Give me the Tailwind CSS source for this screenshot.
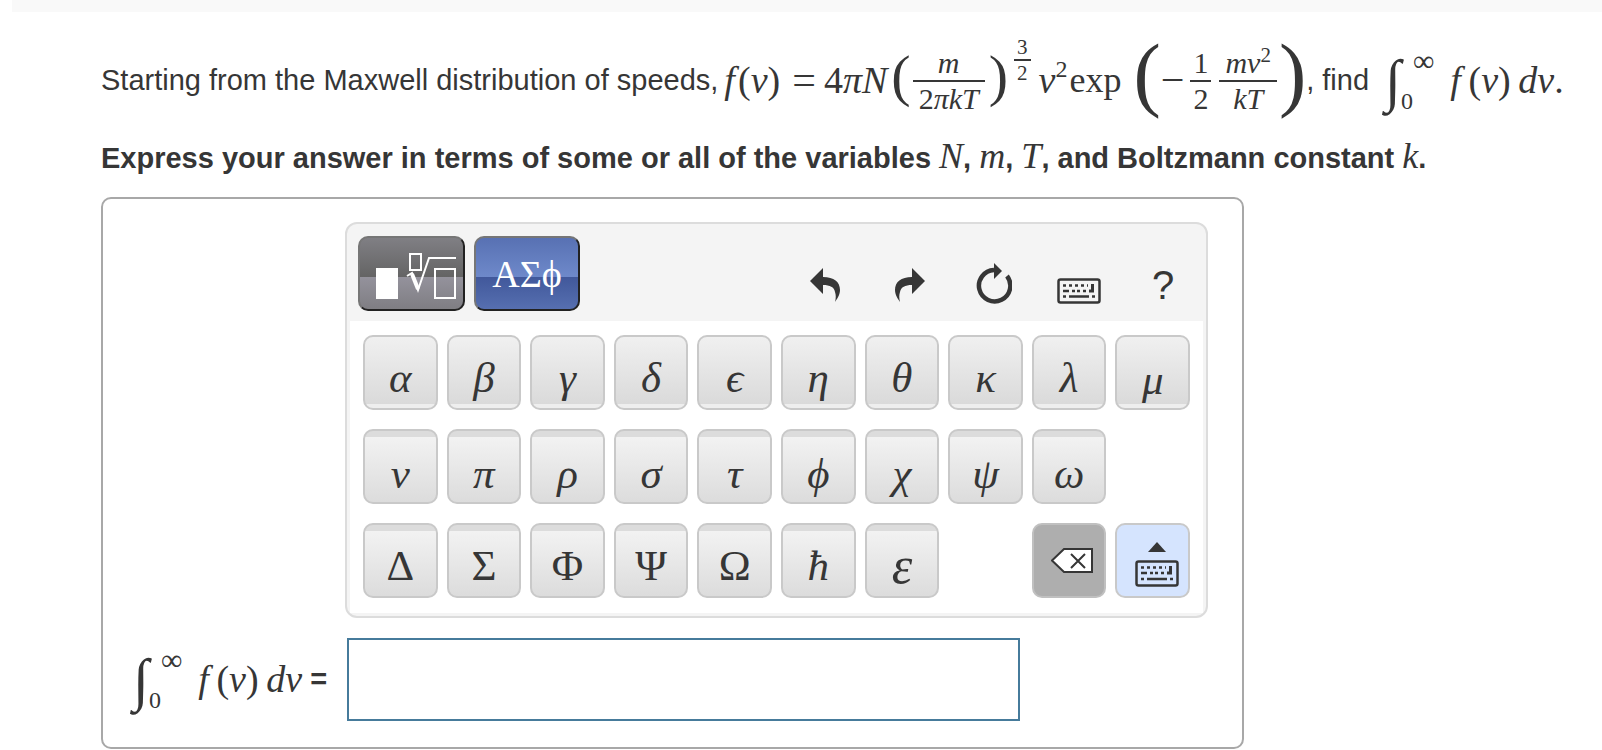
<!DOCTYPE html>
<html lang="en">
<head>
  <meta charset="UTF-8">
  <meta name="viewport" content="width=device-width, initial-scale=1.0">
  <title>Maxwell distribution of speeds</title>
  <script src="https://cdn.jsdelivr.net/npm/@tailwindcss/browser@4"></script>
</head>
<body class="bg-white text-[#363636] font-['Liberation_Sans',sans-serif] text-[29px]">
  <!-- Top strip -->
  <div class="ml-3 h-3 bg-[#f9f9f9]"></div>

  <main class="pl-[101px] pr-4 pt-[23px]">
    <!-- Question -->
    <div class="flex items-center whitespace-nowrap">
      <span>Starting from the Maxwell distribution of speeds,</span>
      <span class="ml-[6px] pb-[2px] font-['Liberation_Serif',serif] text-[38px] leading-10"><i>f</i>&hairsp;(<i>v</i>)</span>
      <span class="ml-3 pb-[2px] font-['Liberation_Serif',serif] text-[42px] leading-10">=</span>
      <span class="ml-2 pb-[2px] font-['Liberation_Serif',serif] text-[38px] leading-10">4<i>πN</i></span>
      <span class="ml-1 pb-[10px] font-['Liberation_Serif',serif] text-[58px] leading-none">(</span>
      <span class="ml-[2px] inline-flex flex-col text-center font-['Liberation_Serif',serif] text-[30px] leading-[34px]">
        <i class="border-b-2 border-[#363636]">m</i>
        <span class="px-[6px]">2<i>πkT</i></span>
      </span>
      <span class="ml-1 pb-[10px] font-['Liberation_Serif',serif] text-[58px] leading-none">)</span>
      <span class="ml-[6px] pb-[42px] inline-flex flex-col text-center font-['Liberation_Serif',serif] text-[21px] leading-6">
        <span class="border-b-2 border-[#363636] px-[3px]">3</span>
        <span>2</span>
      </span>
      <span class="ml-2 pb-[2px] font-['Liberation_Serif',serif] text-[38px] leading-10"><i>v</i></span>
      <span class="pb-6 font-['Liberation_Serif',serif] text-[24px] leading-6">2</span>
      <span class="ml-[2px] pb-[2px] font-['Liberation_Serif',serif] text-[36px] leading-10">exp</span>
      <span class="ml-3 pb-[14px] font-['Liberation_Serif',serif] text-[82px] leading-[64px]">(</span>
      <span class="pb-[2px] font-['Liberation_Serif',serif] text-[42px] leading-10">−</span>
      <span class="ml-[6px] inline-flex flex-col text-center font-['Liberation_Serif',serif] text-[30px] leading-[34px]">
        <span class="border-b-2 border-[#363636] px-[3px]">1</span>
        <span>2</span>
      </span>
      <span class="ml-2 inline-flex flex-col text-center font-['Liberation_Serif',serif] text-[30px] leading-[34px]">
        <span class="flex items-center border-b-2 border-[#363636] px-[6px]"><i>mv</i><span class="pb-4 text-[21px] leading-4">2</span></span>
        <i>kT</i>
      </span>
      <span class="ml-[2px] pb-[14px] font-['Liberation_Serif',serif] text-[82px] leading-[64px]">)</span>
      <span>, find</span>
      <span class="ml-4 font-['Liberation_Serif',serif] text-[58px] leading-none italic">∫</span>
      <span class="inline-flex flex-col font-['Liberation_Serif',serif] text-[24px] leading-10">
        <span class="pl-3 text-[30px]">∞</span>
        <span>0</span>
      </span>
      <span class="ml-4 pb-[2px] font-['Liberation_Serif',serif] text-[38px] leading-10"><i>f</i>&thinsp;(<i>v</i>)&thinsp;<i>dv</i>.</span>
    </div>

    <p class="mt-[11px] whitespace-nowrap font-bold leading-10">
      Express your answer in terms of some or all of the variables
      <i class="font-['Liberation_Serif',serif] text-[36px] font-normal leading-none">N</i>,
      <i class="font-['Liberation_Serif',serif] text-[36px] font-normal leading-none">m</i>,
      <i class="font-['Liberation_Serif',serif] text-[36px] font-normal leading-none">T</i>, and Boltzmann constant
      <i class="font-['Liberation_Serif',serif] text-[36px] font-normal leading-none">k</i>.
    </p>

    <!-- Answer box -->
    <form class="mt-[19px] w-full max-w-[1143px] rounded-[10px] border-2 border-[#a8a8a8] pt-[23px] pb-[26px]">
      <!-- Symbol palette -->
      <div class="ml-[242px] mr-[34px] rounded-xl border-2 border-[#dcdcdc] bg-[#f4f4f4] px-[3px] pb-[3px]">
        <div class="flex h-[97px] items-start justify-between pt-3 pr-[18px] pl-2">
          <div class="flex gap-[9px]">
            <button type="button" aria-label="Templates" class="h-[75px] w-[107px] rounded-[10px] border-2 border-t-[#767676] border-r-[#222] border-b-[#222] border-l-[#767676] bg-[linear-gradient(#807f84,#646464_55%,#94929c_55%,#7f7e83)]">
              <svg class="h-[71px] w-[103px]" viewBox="0 0 103 71" fill="none" stroke="#fff" stroke-width="2">
                <path d="M16 30h22v31h-22z" fill="#fff" stroke="none"/>
                <path d="M50 16h11v16H50zM75 31h20v29H75z"/>
                <path d="M47 38l5-3 6 17 11-32h27"/>
                <path d="M52 36l6 15" stroke-width="4"/>
              </svg>
            </button>
            <button type="button" class="h-[75px] w-[106px] rounded-[10px] border-2 border-t-[#767676] border-r-[#222] border-b-[#222] border-l-[#767676] bg-[linear-gradient(#5871b3,#6e89ca_55%,#41589b_55%,#566fb0)] font-['Liberation_Serif','DejaVu_Serif',serif] text-[38px] leading-none text-white">ΑΣϕ</button>
          </div>
          <div class="flex h-[71px] w-[382px] items-end justify-between">
            <button type="button" aria-label="Undo" class="w-11 pb-1">
              <svg class="mx-auto h-9 w-8" viewBox="0 0 32 36" fill="#363636"><path d="M1 14L14 1v9c11 0 17 5 17 13 0 5-3 9-5 12 1-4 1-7 0-10-1-5-5-7-12-7v9z"/></svg>
            </button>
            <button type="button" aria-label="Redo" class="w-11 pb-1">
              <svg class="mx-auto h-9 w-8" viewBox="0 0 32 36" fill="#363636"><path d="M31 14L18 1v9C7 10 1 15 1 23c0 5 3 9 5 12-1-4-1-7 0-10 1-5 5-7 12-7v9z"/></svg>
            </button>
            <button type="button" aria-label="Reset" class="w-11 pb-[2px]">
              <svg class="mx-auto h-[42px] w-9" viewBox="0 0 36 42"><path d="M31 13A15.700 15.700 0 1 1 18 7" fill="none" stroke="#363636" stroke-width="4.500"/><path d="M18 0l8 8-8 8z" fill="#363636"/></svg>
            </button>
            <button type="button" aria-label="Keyboard" class="w-11 pb-[2px]">
              <svg class="h-7 w-11" viewBox="0 0 44 28" fill="none" stroke="#363636" stroke-width="2.500">
                <rect x="1.500" y="2.500" width="41" height="23" rx="2"/>
                <path d="M6 8.500h25" stroke-dasharray="3 3"/><path d="M6 14h6m3 0h3m2 0h3m3 0h3M6 19.500h3m3 0h20m3 0h3"/><path d="M32 14h5m-1.500 1V7" stroke-width="3"/>
              </svg>
            </button>
            <button type="button" aria-label="Help" class="w-11 pb-[2px] text-[40px] leading-10">?</button>
          </div>
        </div>

        <div class="grid grid-cols-10 gap-x-[9px] gap-y-[19px] bg-white px-[13px] pt-[14px] pb-[15px] font-['Liberation_Serif','DejaVu_Serif',serif] text-[43px] leading-none">
          <button type="button" class="h-[75px] rounded-[10px] border-2 border-[#c9c9c9] bg-[linear-gradient(#f0f0f0,#dadada_94%,#eee_94%)] pt-[10px] italic">α</button>
          <button type="button" class="h-[75px] rounded-[10px] border-2 border-[#c9c9c9] bg-[linear-gradient(#f0f0f0,#dadada_94%,#eee_94%)] pt-[10px] italic">β</button>
          <button type="button" class="h-[75px] rounded-[10px] border-2 border-[#c9c9c9] bg-[linear-gradient(#f0f0f0,#dadada_94%,#eee_94%)] pt-[10px] italic">γ</button>
          <button type="button" class="h-[75px] rounded-[10px] border-2 border-[#c9c9c9] bg-[linear-gradient(#f0f0f0,#dadada_94%,#eee_94%)] pt-[10px] italic">δ</button>
          <button type="button" class="h-[75px] rounded-[10px] border-2 border-[#c9c9c9] bg-[linear-gradient(#f0f0f0,#dadada_94%,#eee_94%)] pt-[10px] italic">ϵ</button>
          <button type="button" class="h-[75px] rounded-[10px] border-2 border-[#c9c9c9] bg-[linear-gradient(#f0f0f0,#dadada_94%,#eee_94%)] pt-[10px] italic">η</button>
          <button type="button" class="h-[75px] rounded-[10px] border-2 border-[#c9c9c9] bg-[linear-gradient(#f0f0f0,#dadada_94%,#eee_94%)] pt-[10px] italic">θ</button>
          <button type="button" class="h-[75px] rounded-[10px] border-2 border-[#c9c9c9] bg-[linear-gradient(#f0f0f0,#dadada_94%,#eee_94%)] pt-[10px] italic">κ</button>
          <button type="button" class="h-[75px] rounded-[10px] border-2 border-[#c9c9c9] bg-[linear-gradient(#f0f0f0,#dadada_94%,#eee_94%)] pt-[10px] italic">λ</button>
          <button type="button" class="h-[75px] rounded-[10px] border-2 border-[#c9c9c9] bg-[linear-gradient(#f0f0f0,#dadada_94%,#eee_94%)] pt-[14px] italic">μ</button>

          <button type="button" class="h-[75px] rounded-[10px] border-2 border-[#c9c9c9] bg-[linear-gradient(#dcdcdc_9%,#f2f2f2_9%,#dcdcdc)] pt-[14px] italic">ν</button>
          <button type="button" class="h-[75px] rounded-[10px] border-2 border-[#c9c9c9] bg-[linear-gradient(#dcdcdc_9%,#f2f2f2_9%,#dcdcdc)] pt-[14px] italic">π</button>
          <button type="button" class="h-[75px] rounded-[10px] border-2 border-[#c9c9c9] bg-[linear-gradient(#dcdcdc_9%,#f2f2f2_9%,#dcdcdc)] pt-[14px] italic">ρ</button>
          <button type="button" class="h-[75px] rounded-[10px] border-2 border-[#c9c9c9] bg-[linear-gradient(#dcdcdc_9%,#f2f2f2_9%,#dcdcdc)] pt-[14px] italic">σ</button>
          <button type="button" class="h-[75px] rounded-[10px] border-2 border-[#c9c9c9] bg-[linear-gradient(#dcdcdc_9%,#f2f2f2_9%,#dcdcdc)] pt-[14px] italic">τ</button>
          <button type="button" class="h-[75px] rounded-[10px] border-2 border-[#c9c9c9] bg-[linear-gradient(#dcdcdc_9%,#f2f2f2_9%,#dcdcdc)] pt-[14px] italic">ϕ</button>
          <button type="button" class="h-[75px] rounded-[10px] border-2 border-[#c9c9c9] bg-[linear-gradient(#dcdcdc_9%,#f2f2f2_9%,#dcdcdc)] pt-[14px] italic">χ</button>
          <button type="button" class="h-[75px] rounded-[10px] border-2 border-[#c9c9c9] bg-[linear-gradient(#dcdcdc_9%,#f2f2f2_9%,#dcdcdc)] pt-[14px] italic">ψ</button>
          <button type="button" class="h-[75px] rounded-[10px] border-2 border-[#c9c9c9] bg-[linear-gradient(#dcdcdc_9%,#f2f2f2_9%,#dcdcdc)] pt-[14px] italic">ω</button>

          <button type="button" class="col-start-1 h-[75px] rounded-[10px] border-2 border-[#c9c9c9] bg-[linear-gradient(#dcdcdc_9%,#f2f2f2_9%,#dcdcdc)] pt-[10px]">Δ</button>
          <button type="button" class="h-[75px] rounded-[10px] border-2 border-[#c9c9c9] bg-[linear-gradient(#dcdcdc_9%,#f2f2f2_9%,#dcdcdc)] pt-[10px]">Σ</button>
          <button type="button" class="h-[75px] rounded-[10px] border-2 border-[#c9c9c9] bg-[linear-gradient(#dcdcdc_9%,#f2f2f2_9%,#dcdcdc)] pt-[10px]">Φ</button>
          <button type="button" class="h-[75px] rounded-[10px] border-2 border-[#c9c9c9] bg-[linear-gradient(#dcdcdc_9%,#f2f2f2_9%,#dcdcdc)] pt-[10px]">Ψ</button>
          <button type="button" class="h-[75px] rounded-[10px] border-2 border-[#c9c9c9] bg-[linear-gradient(#dcdcdc_9%,#f2f2f2_9%,#dcdcdc)] pt-[10px]">Ω</button>
          <button type="button" class="h-[75px] rounded-[10px] border-2 border-[#c9c9c9] bg-[linear-gradient(#dcdcdc_9%,#f2f2f2_9%,#dcdcdc)] pt-[10px] italic">ħ</button>
          <button type="button" class="h-[75px] rounded-[10px] border-2 border-[#c9c9c9] bg-[linear-gradient(#dcdcdc_9%,#f2f2f2_9%,#dcdcdc)] pt-[10px] text-[52px] italic">ε</button>
          <button type="button" aria-label="Backspace" class="col-start-9 h-[75px] rounded-[10px] border-2 border-[#c0c0c0] bg-[#aeaeae] pl-[17px]">
            <svg class="h-[27px] w-[43px]" viewBox="0 0 43 27" fill="#fff" stroke="#363636" stroke-width="2"><path d="M1 13.500L13 2h28v23H13z"/><path d="M20 7l14 14M34 7L20 21" /></svg>
          </button>
          <button type="button" aria-label="Hide keyboard" class="h-[75px] rounded-[10px] border-2 border-[#c9c9c9] bg-[#d5e4fe] pt-2 pl-2">
            <svg class="mx-auto h-[45px] w-11" viewBox="0 0 44 45" fill="none" stroke="#363636" stroke-width="2.500">
              <path d="M13 10l9-10 9 10z" fill="#363636" stroke="none"/>
              <rect x="1.500" y="19.500" width="41" height="24" rx="2"/>
              <path d="M6 25.500h25" stroke-dasharray="3 3"/><path d="M6 31h6m3 0h3m2 0h3m3 0h3M6 37h3m3 0h20m3 0h3"/><path d="M32 31h5m-1.500 1V24" stroke-width="3"/>
            </svg>
          </button>
        </div>
      </div>

      <!-- Answer field -->
      <div class="mt-5 flex">
        <label for="answer" class="flex w-[244px] items-center pl-[30px] whitespace-nowrap">
          <span class="font-['Liberation_Serif',serif] text-[58px] leading-none italic">∫</span>
          <span class="inline-flex flex-col font-['Liberation_Serif',serif] text-[24px] leading-10">
            <span class="pl-3 text-[30px]">∞</span>
            <span>0</span>
          </span>
          <span class="ml-4 pb-[2px] font-['Liberation_Serif',serif] text-[38px] leading-10"><i>f</i>&thinsp;(<i>v</i>)&thinsp;<i>dv</i></span>
          <span class="ml-2 font-bold">=</span>
        </label>
        <input id="answer" type="text" class="h-[83px] w-[673px] border-2 border-[#467b9b] bg-white px-3 outline-none">
      </div>
    </form>
  </main>
</body>
</html>
